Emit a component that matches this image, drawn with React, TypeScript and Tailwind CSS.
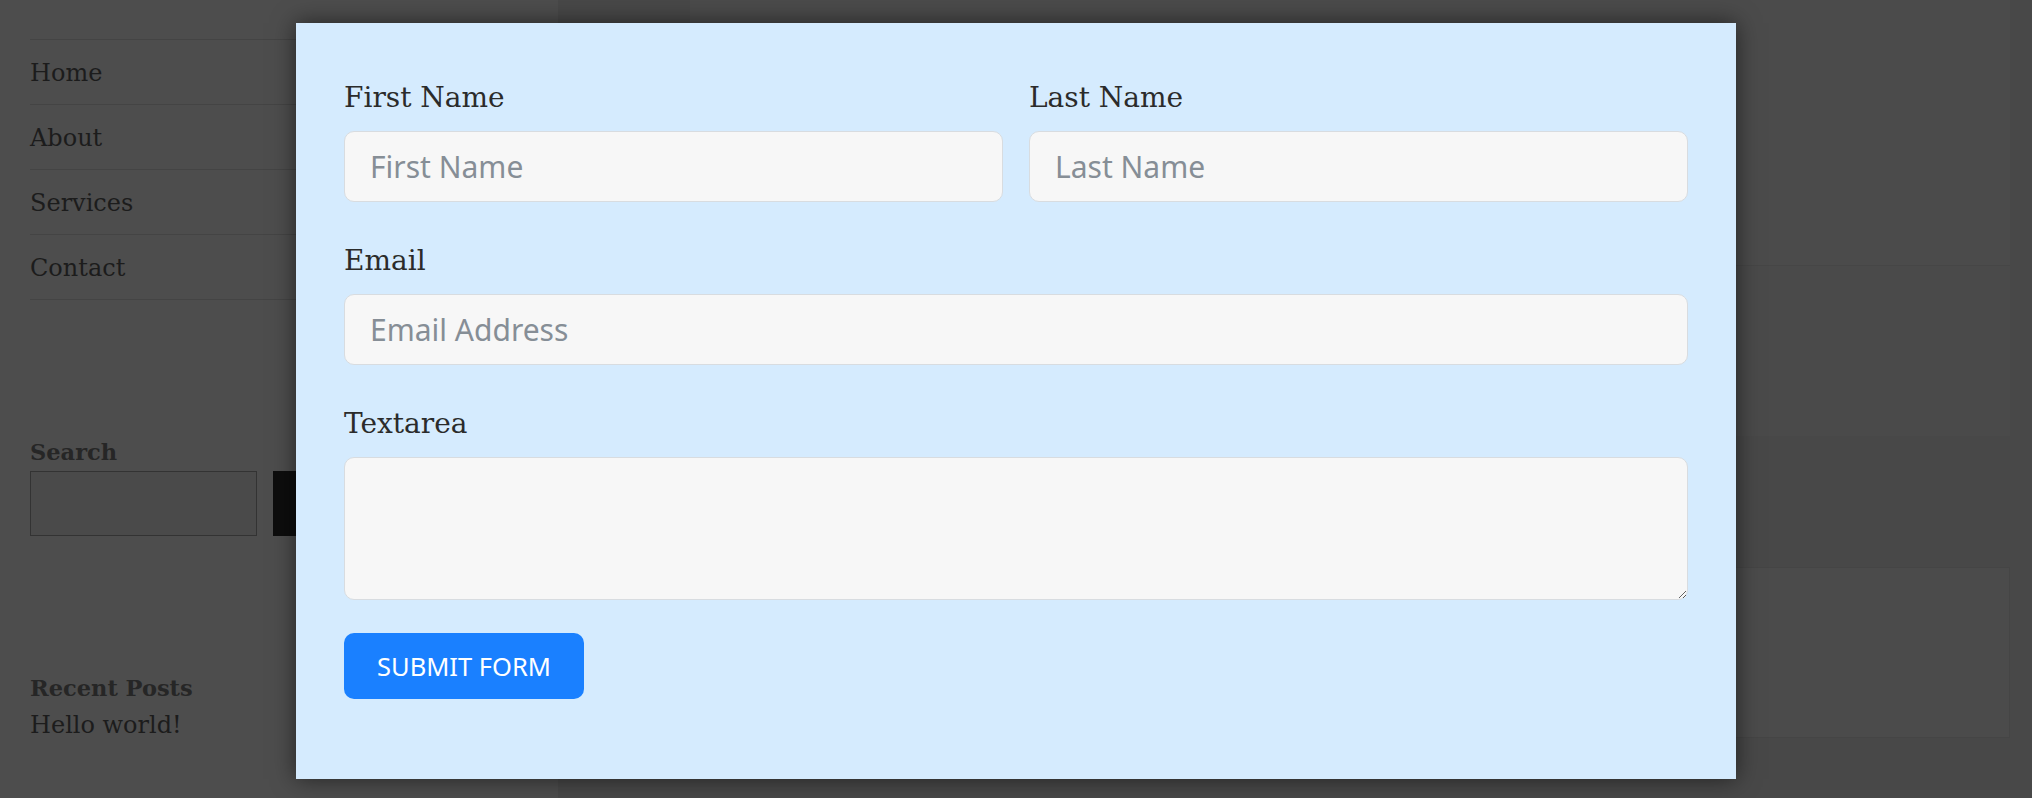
import React from 'react'

const serif = { fontFamily: '"DejaVu Serif", "Liberation Serif", serif' }
const sans = { fontFamily: '"Noto Sans", "Open Sans", sans-serif' }

const navItems = ['Home', 'About', 'Services', 'Contact']

function Sidebar() {
  return (
    <aside className="w-[558px] shrink-0 bg-[#4d4d4d] pl-[30px] pr-[30px] pt-[39px]" style={serif}>
      <ul className="border-b border-[#444444]">
        {navItems.map((item) => (
          <li
            key={item}
            className="h-[65px] border-t border-[#444444] pt-[15px] text-[24px] leading-[36px] text-[#1c1c1c]"
          >
            {item}
          </li>
        ))}
      </ul>

      <h2 className="mt-[137px] mb-[4px] text-[22.5px] font-bold leading-[30px] text-[#262626]">Search</h2>
      <div className="flex gap-[16px]">
        <div className="h-[65px] w-[227px] border border-[#333333] bg-[#4a4a4a]" />
        <div className="h-[65px] w-[110px] bg-[#0d0d0d]" />
      </div>

      <h2 className="mt-[137px] mb-[4px] text-[22.5px] font-bold leading-[30px] text-[#262626]">Recent Posts</h2>
      <p className="text-[24px] leading-[36px] text-[#1c1c1c]">Hello world!</p>
    </aside>
  )
}

function Field({ label, placeholder }: { label: string; placeholder: string }) {
  return (
    <div>
      <label className="mb-[13px] block text-[28px] leading-[40px] text-[#2b2b2b]" style={serif}>
        {label}
      </label>
      <input
        type="text"
        placeholder={placeholder}
        className="block h-[71px] w-full rounded-[10px] border border-[#d8dce0] bg-[#f7f7f7] px-[25px] text-[30px] text-[#333] outline-none placeholder:text-[#868e96]"
        style={sans}
      />
    </div>
  )
}

function ContactModal() {
  return (
    <div className="absolute left-[296px] top-[23px] w-[1440px] bg-[#d5ebfe] px-[48px] pt-[55px] pb-[80px] shadow-[0_0_22px_rgba(0,0,0,0.55)]">
      <div className="grid grid-cols-2 gap-x-[26px]">
        <Field label="First Name" placeholder="First Name" />
        <Field label="Last Name" placeholder="Last Name" />
      </div>

      <div className="mt-[39px]">
        <Field label="Email" placeholder="Email Address" />
      </div>

      <div className="mt-[39px]">
        <label className="mb-[13px] block text-[28px] leading-[40px] text-[#2b2b2b]" style={serif}>
          Textarea
        </label>
        <textarea className="block h-[143px] w-full rounded-[10px] border border-[#d8dce0] bg-[#f7f7f7] px-[25px] py-[16px] text-[30px] outline-none" />
      </div>

      <button
        type="button"
        className="mt-[33px] h-[66px] w-[240px] rounded-[10px] bg-[#1a80ff] text-[25.5px] text-white"
        style={sans}
      >
        SUBMIT FORM
      </button>
    </div>
  )
}

export default function App() {
  return (
    <div className="relative flex h-[798px] w-[2032px] overflow-hidden bg-[#484848]">
      <Sidebar />
      <div className="w-[132px] shrink-0 bg-[#484848]" />
      <main className="w-[1320px] shrink-0">
        <div className="h-[265px] bg-[#4b4b4b]" />
        <div className="h-[171px] border-t border-[#464646] bg-[#4a4a4a]" />
        <div className="mt-[131px] h-[171px] border border-[#454545] bg-[#4b4b4b]" />
      </main>
      <ContactModal />
    </div>
  )
}
